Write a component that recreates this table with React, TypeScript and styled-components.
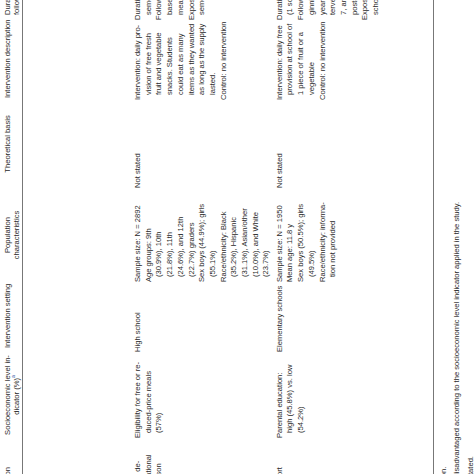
import React from "react";
import styled, { createGlobalStyle } from "styled-components";

const GlobalStyle = createGlobalStyle`
  html, body {
    margin: 0;
    padding: 0;
    background: #ffffff;
  }
`;

// widths of the columns of the printed table;
// the first column starts below the visible area
const COLUMNS = [116, 86, 70, 94, 88, 80, 120];
const TEMPLATE = COLUMNS.map((w) => `${w}px`).join(" ");

const Page = styled.div`
  width: 474px;
  height: 474px;
  overflow: hidden;
  background: #ffffff;
`;

// the table is printed landscape, so the sheet is turned a quarter turn
const Sheet = styled.div`
  width: 474px;
  height: 474px;
  overflow: hidden;
  transform: rotate(-90deg);
  font-family: "Liberation Sans", Arial, sans-serif;
  font-size: 7.6px;
  color: #2a2a2a;
`;

const Table = styled.div`
  margin-left: -80px;
  width: ${COLUMNS.reduce((s, w) => s + w, 0)}px;
`;

const HeadRow = styled.div`
  display: grid;
  grid-template-columns: ${TEMPLATE};
  box-sizing: border-box;
  height: 22.5px;
  padding-top: 2.5px;
  line-height: 9px;
  border-bottom: 1.5px solid #777777;
`;

const HeadCell = styled.div<{ $align?: "left" | "center"; $inset?: number }>`
  text-align: ${(p) => p.$align ?? "left"};
  padding-left: ${(p) => p.$inset ?? 0}px;
  white-space: nowrap;
`;

const Sup = styled.sup`
  font-size: 5px;
  line-height: 0;
  color: #3d5fa8;
`;

const Body = styled.div`
  box-sizing: border-box;
  height: 411px;
  padding-top: 110.5px;
  border-bottom: 1.5px solid #777777;
`;

const Row = styled.div`
  display: grid;
  grid-template-columns: ${TEMPLATE};
  line-height: 10.7px;
  padding-bottom: 2.6px;
`;

const Cell = styled.div``;

const Line = styled.div<{ $indent: boolean }>`
  white-space: nowrap;
  padding-left: ${(p) => (p.$indent ? 5 : 0)}px;
`;

const Notes = styled.div`
  margin-left: -113px;
  padding-top: 3px;
  line-height: 13.6px;
  white-space: nowrap;
`;

const Note = styled.div``;

// every item is a list of printed lines; lines after the first hang indented
type Item = string[];
type RowData = Item[][];

const ROWS: RowData[] = [
  [
    [["Quasi-experimental trial de-", "sign, matched observational", "control group comparison"]],
    [["Eligibility for free or re-", "duced-price meals", "(57%)"]],
    [["High school"]],
    [
      ["Sample size: N = 2892"],
      ["Age groups: 9th", "(30.9%), 10th", "(21.8%), 11th", "(24.6%), and 12th", "(22.7%) graders"],
      ["Sex boys (44.9%); girls", "(55.1%)"],
      ["Race/ethnicity: Black", "(35.2%), Hispanic", "(31.1%), Asian/other", "(10.0%), and White", "(23.7%)"],
    ],
    [["Not stated"]],
    [
      [
        "Intervention: daily pro-",
        "vision of free fresh",
        "fruit and vegetable",
        "snacks. Students",
        "could eat as many",
        "items as they wanted",
        "as long as the supply",
        "lasted.",
      ],
      ["Control: no intervention"],
    ],
    [
      ["Duration: 1", "semester"],
      ["Follow-up:", "baseline and", "measurement"],
      ["Exposure: 1", "semester"],
    ],
  ],
  [
    [["Prospective school cohort"]],
    [["Parental education:", "high (45.8%) vs. low", "(54.2%)"]],
    [["Elementary schools"]],
    [
      ["Sample size: N = 1950"],
      ["Mean age: 11.8 y"],
      ["Sex boys (50.5%); girls", "(49.5%)"],
      ["Race/ethnicity: informa-", "tion not provided"],
    ],
    [["Not stated"]],
    [
      ["Intervention: daily free", "provision at school of", "1 piece of fruit or a", "vegetable"],
      ["Control: no intervention"],
    ],
    [
      ["Duration: 1 year", "(1 school year)"],
      ["Follow-up: be-", "ginning of school", "year, end of in-", "tervention, month", "7, and 1 year", "post-intervention"],
      ["Exposure: at", "school"],
    ],
  ],
];

const HEADERS: { lines: React.ReactNode[]; align?: "left" | "center"; inset?: number }[] = [
  { lines: ["Study design and location"] },
  {
    lines: [
      "Socioeconomic level in-",
      <>
        dicator (%)<Sup>a</Sup>
      </>,
    ],
    align: "center",
  },
  { lines: ["Intervention setting"], inset: 4 },
  { lines: ["Population", "characteristics"], align: "center" },
  { lines: ["Theoretical basis"], align: "center" },
  { lines: ["Intervention description"], inset: 2 },
  { lines: ["Duration and", "follow-up"], inset: 5 },
];

export default function App() {
  return (
    <Page>
      <GlobalStyle />
      <Sheet>
        <Table>
          <HeadRow>
            {HEADERS.map((h, i) => (
              <HeadCell key={i} $align={h.align} $inset={h.inset}>
                {h.lines.map((l, k) => (
                  <div key={k}>{l}</div>
                ))}
              </HeadCell>
            ))}
          </HeadRow>
          <Body>
            {ROWS.map((row, r) => (
              <Row key={r}>
                {row.map((items, c) => (
                  <Cell key={c}>
                    {items.map((item) =>
                      item.map((line, k) => (
                        <Line key={line + k} $indent={k > 0}>
                          {line}
                        </Line>
                      ))
                    )}
                  </Cell>
                ))}
              </Row>
            ))}
          </Body>
        </Table>
        <Notes>
          <Note>Note. SES, socioeconomic position.</Note>
          <Note>
            <Sup>a</Sup>Proportion of pupils considered disadvantaged according to the socioeconomic level indicator
            applied in the study.
          </Note>
          <Note>
            <Sup>b</Sup>Values are % unless otherwise stated.
          </Note>
        </Notes>
      </Sheet>
    </Page>
  );
}
